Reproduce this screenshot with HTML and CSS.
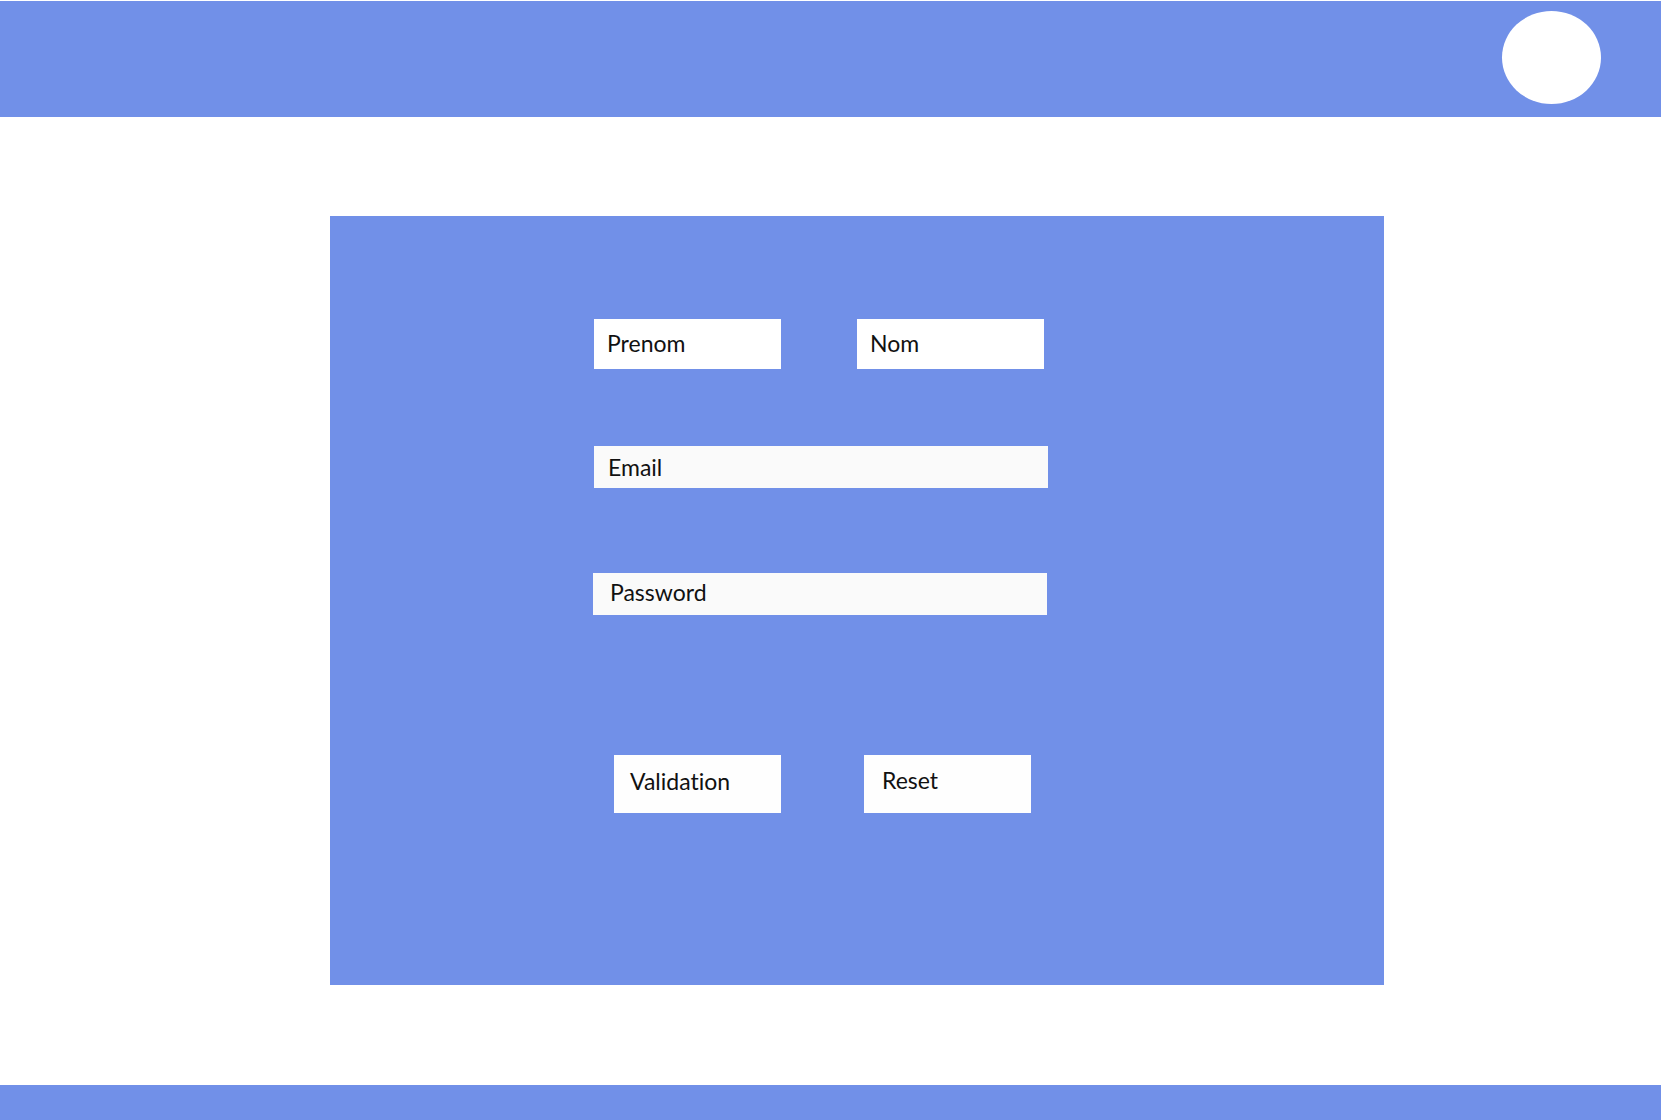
FILE: index.html
```html
<!DOCTYPE html>
<html lang="fr">
<head>
<meta charset="utf-8">
<title>Inscription</title>
<link rel="stylesheet" href="styles.css">
</head>
<body>
<header class="topbar">
  <div class="avatar"></div>
</header>
<main class="page">
  <section class="card">
    <form class="form">
      <div class="row-names">
        <input class="field field-name field-prenom" type="text" placeholder="Prenom">
        <input class="field field-name field-nom" type="text" placeholder="Nom">
      </div>
      <input class="field field-wide field-email" type="email" placeholder="Email">
      <input class="field field-wide field-password" type="password" placeholder="Password">
      <div class="row-buttons">
        <button class="btn btn-validate" type="button">Validation</button>
        <button class="btn btn-reset" type="reset">Reset</button>
      </div>
    </form>
  </section>
</main>
<footer class="bottombar"></footer>
</body>
</html>
```

FILE: styles.css
```css
html, body {
  margin: 0;
  padding: 0;
  background: #ffffff;
  overflow: hidden;
}

body {
  font-family: "Lato", "Open Sans", sans-serif;
  color: #111111;
  font-variant-ligatures: none;
}

.topbar {
  margin-top: 1px;
  height: 116px;
  background: #7190e8;
  display: flex;
  justify-content: flex-end;
  align-items: flex-start;
  padding: 10px 60px 0 0;
  box-sizing: border-box;
}

.avatar {
  width: 99px;
  height: 93px;
  border-radius: 50%;
  background: #ffffff;
}

.page {
  padding: 99px 0 0 330px;
}

.card {
  width: 1054px;
  height: 769px;
  background: #7190e8;
  box-sizing: border-box;
  padding: 103px 0 0 264px;
}

.form {
  display: flex;
  flex-direction: column;
  align-items: flex-start;
}

.row-names {
  display: flex;
  gap: 76px;
}

.field {
  display: block;
  border: none;
  outline: none;
  margin: 0;
  box-sizing: border-box;
  font-family: "Lato", "Open Sans", sans-serif;
  font-size: 23px;
  font-variant-ligatures: none;
  color: #111111;
  background: #ffffff;
}

.field::placeholder {
  color: #111111;
  opacity: 1;
}

.field-name {
  width: 187px;
  height: 50px;
  padding: 0 0 2px 13px;
}

.field-wide {
  width: 454px;
  height: 42px;
  background: #fafafa;
}

.field-email {
  margin-top: 77px;
  padding: 0 0 0 14px;
}

.field-password {
  margin-top: 85px;
  margin-left: -1px;
  padding: 0 0 4px 17px;
}

.row-buttons {
  display: flex;
  gap: 83px;
  margin-top: 140px;
  padding-left: 20px;
}

.btn {
  width: 167px;
  height: 58px;
  border: none;
  margin: 0;
  background: #fefefe;
  font-family: "Lato", "Open Sans", sans-serif;
  font-size: 23px;
  font-variant-ligatures: none;
  color: #111111;
  text-align: left;
  box-sizing: border-box;
  padding: 0 0 6px 16px;
  cursor: pointer;
}

.btn-reset {
  padding-left: 18px;
  padding-bottom: 8px;
}

.bottombar {
  margin-top: 100px;
  height: 35px;
  background: #7190e8;
}
```
